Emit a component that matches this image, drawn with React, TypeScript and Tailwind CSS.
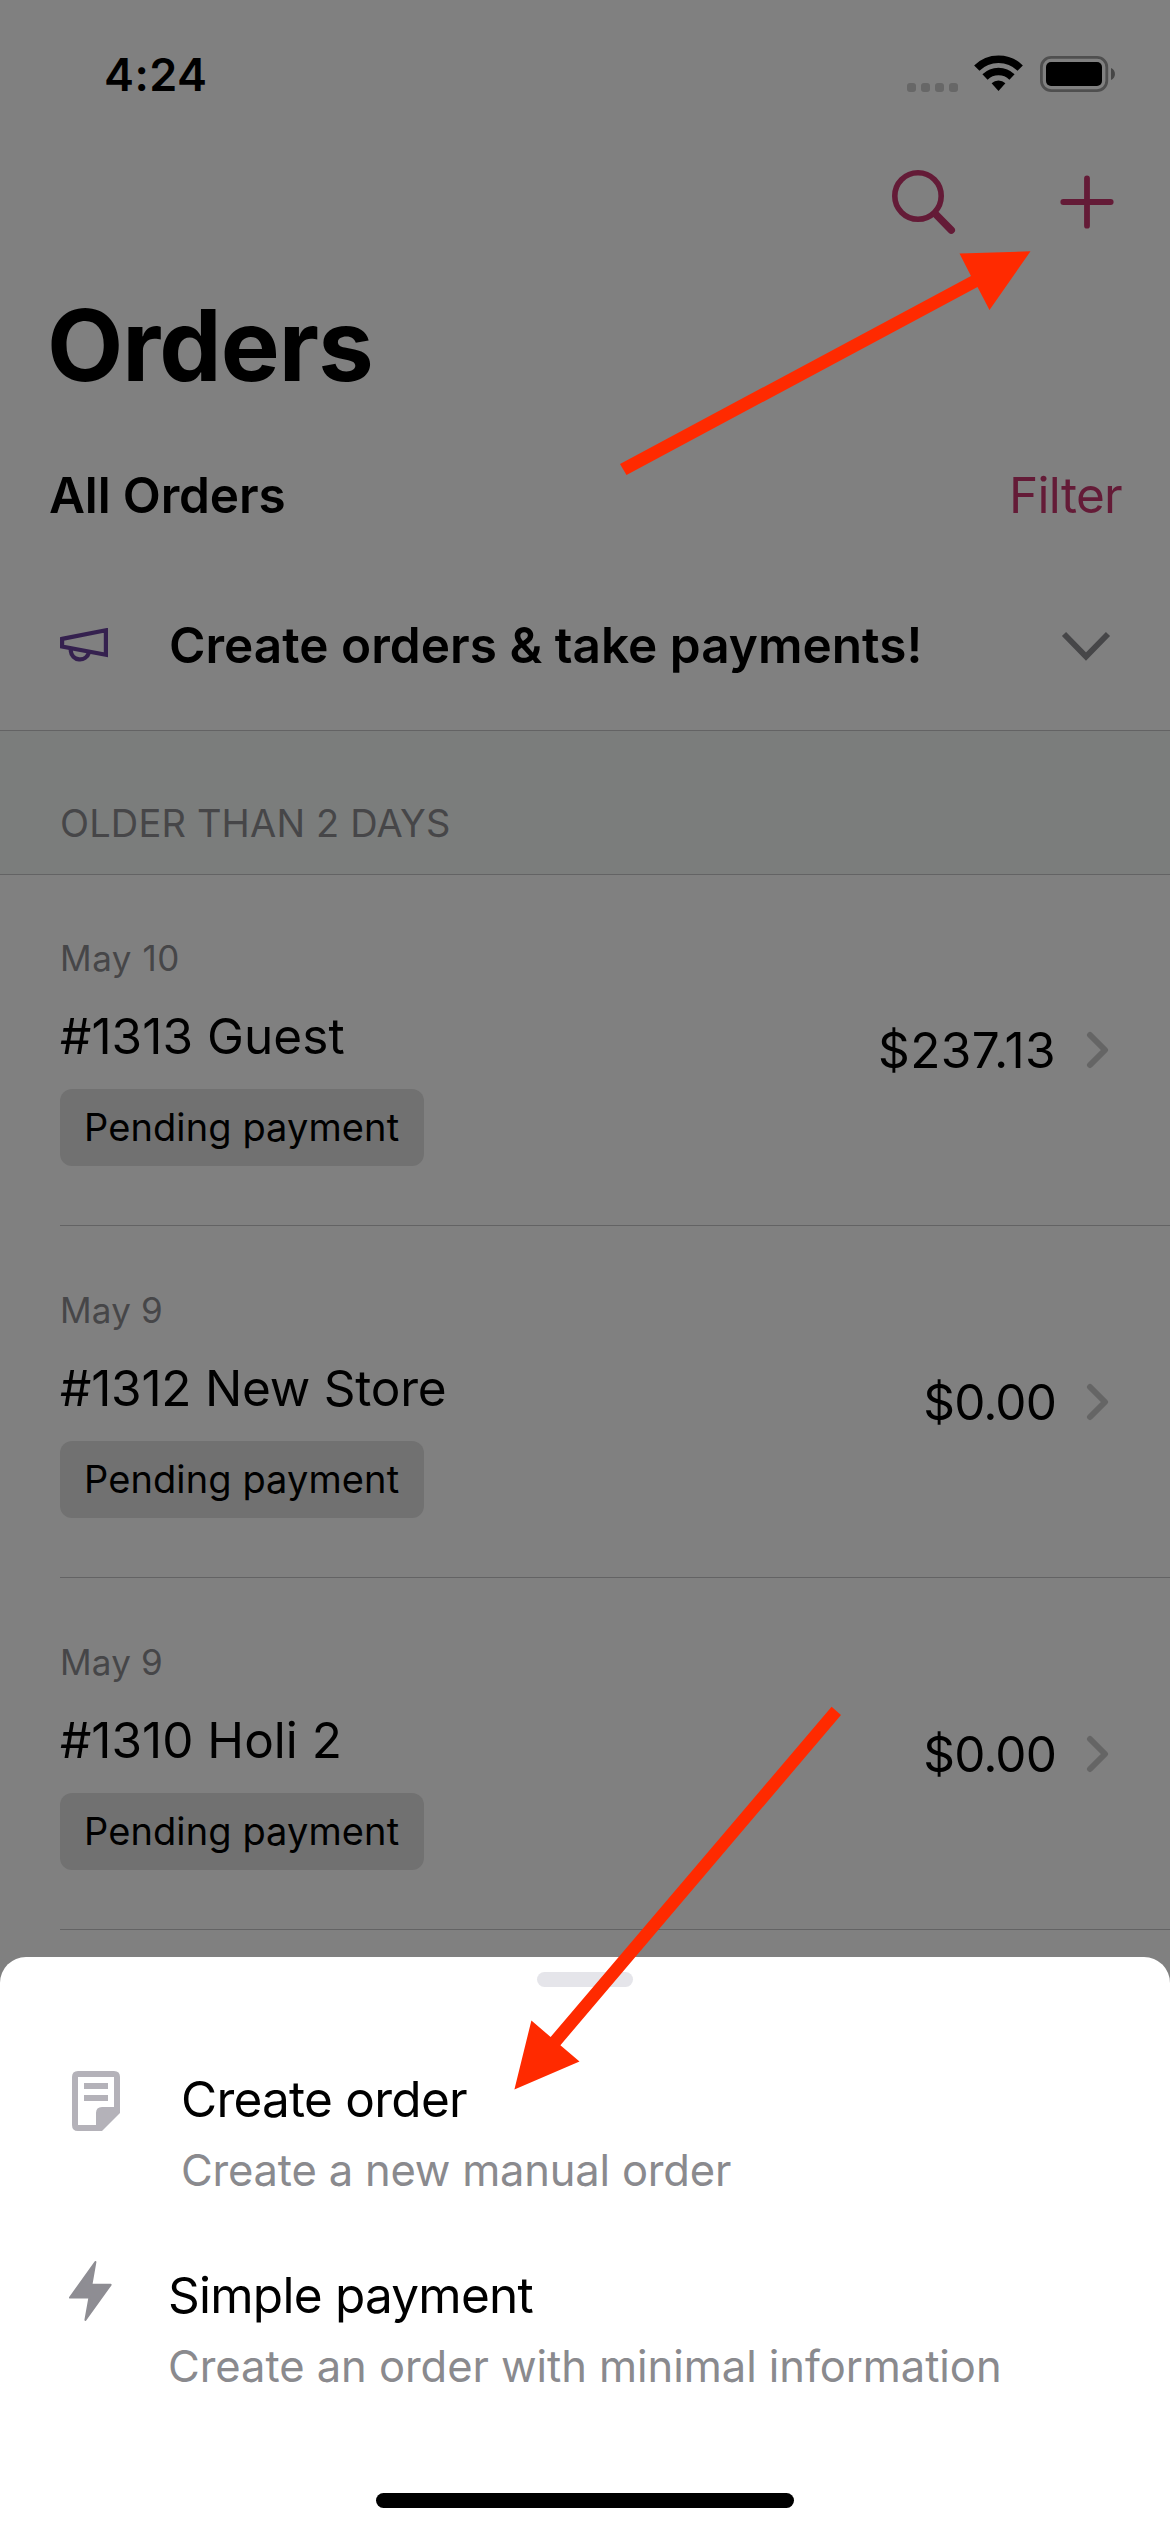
import React from "react";

type Order = {
  date: string;
  dateClass: string;
  title: string;
  titleClass: string;
  status: string;
  total: string;
  totalClass: string;
};

const orders: Order[] = [
  {
    date: "May 10",
    dateClass: "tracking-[0.55px]",
    title: "#1313 Guest",
    titleClass: "tracking-[0.05px]",
    status: "Pending payment",
    total: "$237.13",
    totalClass: "tracking-[0.42px]",
  },
  {
    date: "May 9",
    dateClass: "tracking-[0.2px]",
    title: "#1312 New Store",
    titleClass: "tracking-[-0.22px]",
    status: "Pending payment",
    total: "$0.00",
    totalClass: "tracking-[-0.9px]",
  },
  {
    date: "May 9",
    dateClass: "tracking-[0.2px]",
    title: "#1310 Holi 2",
    titleClass: "tracking-[0px]",
    status: "Pending payment",
    total: "$0.00",
    totalClass: "tracking-[-0.9px]",
  },
];

function StatusBar() {
  return (
    <div className="flex h-[150px] shrink-0 items-center justify-between pl-[104px] pr-[54px]">
      <span className="text-[45px] leading-[56px] font-semibold tracking-[0.45px]">4:24</span>
      <div className="flex items-center">
        <div className="mt-[24px] mr-[16px] flex gap-[5px]">
          {[0, 1, 2, 3].map((i) => (
            <span key={i} className="size-[9px] rounded-[3px] bg-[#676767]" />
          ))}
        </div>
        <svg className="-mt-[4px] mr-[17px] h-[36px] w-[49px]" viewBox="0 0 49 36" fill="none">
          <path d="M2.8 13.1 A31 31 0 0 1 46.2 13.1" stroke="#000" strokeWidth="7.6" />
          <path d="M11 22 A19.2 19.2 0 0 1 38 22" stroke="#000" strokeWidth="7.4" />
          <path d="M17.6 28.2 A10.2 10.2 0 0 1 31.4 28.2 L24.5 36 Z" fill="#000" />
        </svg>
        <svg className="-mt-[2px] h-[36px] w-[76px]" viewBox="0 0 76 36" fill="none">
          <rect x="1.4" y="1.4" width="65.4" height="33.2" rx="9.8" stroke="#4f4f4f" strokeWidth="2.8" />
          <rect x="6" y="6" width="56" height="24" rx="5" fill="#000" />
          <path d="M71 12 C76.3 14 76.3 22 71 24 Z" fill="#464646" />
        </svg>
      </div>
    </div>
  );
}

function NavBar() {
  return (
    <div className="flex h-[103px] shrink-0 items-center justify-end gap-[104px] pr-[56px] text-[#641b37]">
      <svg className="mt-[2px] h-[66px] w-[64px]" viewBox="0 0 64 66" fill="none" stroke="currentColor" strokeLinecap="round">
        <circle cx="26" cy="26" r="23.2" strokeWidth="5.6" />
        <path d="M43.5 44 L59.3 60.2" strokeWidth="7.4" />
      </svg>
      <svg className="h-[54px] w-[54px]" viewBox="0 0 54 54" fill="none" stroke="currentColor" strokeWidth="5.8" strokeLinecap="round">
        <path d="M27 3.3 V50.7 M3.3 27 H50.7" />
      </svg>
    </div>
  );
}

function PromoRow() {
  return (
    <div className="mt-[36px] flex h-[169px] shrink-0 items-center pr-[58px] pb-px pl-[60px]">
      <svg className="mt-[2px] h-[36px] w-[48px]" viewBox="0 0 48 36" fill="none" stroke="#35214f" strokeWidth="4.2">
        <path d="M2.1 10.9 L45.9 2.3 V26.8 L2.1 18.6 Z" />
        <path d="M10.8 20 V23 A9.2 9.2 0 0 0 28.8 24.8" />
      </svg>
      <span className="ml-[61px] flex-1 text-[49.5px] leading-[60px] font-semibold tracking-[0.02px]">
        Create orders &amp; take payments!
      </span>
      <svg className="mt-[2px] h-[32px] w-[52px]" viewBox="0 0 52 32" fill="none">
        <path d="M4 4 L26 26.5 L48 4" stroke="#464648" strokeWidth="5.8" />
      </svg>
    </div>
  );
}

function OrderRow({ order }: { order: Order }) {
  return (
    <li className="ml-[60px] flex h-[352px] shrink-0 items-center border-b border-[#636364] pr-[60px]">
      <div className="flex h-full flex-1 flex-col items-start pt-[63px]">
        <span className={`text-[35px] leading-[42px] text-[#464648] ${order.dateClass}`}>{order.date}</span>
        <span className={`mt-[27px] text-[49.5px] leading-[60px] ${order.titleClass}`}>{order.title}</span>
        <span className="mt-[23px] flex h-[77px] w-[364px] items-center rounded-[12px] bg-[#717171] pb-px pl-[24px] text-[38px] leading-[46px] tracking-[0.1px]">
          {order.status}
        </span>
      </div>
      <span className={`text-[49.5px] leading-[60px] ${order.totalClass}`}>{order.total}</span>
      <svg className="ml-[29px] h-[38px] w-[25px]" viewBox="0 0 25 38" fill="none">
        <path d="M5 4 L20 19 L5 34" stroke="#656565" strokeWidth="6" strokeLinecap="round" strokeLinejoin="round" />
      </svg>
    </li>
  );
}

function NoteIcon() {
  return (
    <svg className="h-[60px] w-[48px]" viewBox="0 0 48 60" fill="#b4b2b9">
      <path
        fillRule="evenodd"
        d="M6 0 H42 Q48 0 48 6 V42 L30 60 H6 Q0 60 0 54 V6 Q0 0 6 0 Z M6 6 V54 H24 V42 Q24 36 30 36 H42 V6 Z"
      />
      <path d="M12 12 H36 V18 H12 Z M12 24 H36 V30 H12 Z" />
    </svg>
  );
}

function BoltIcon() {
  return (
    <svg className="h-[60px] w-[43px]" viewBox="0 0 43 60" fill="#8e8d93" stroke="#8e8d93" strokeWidth="2" strokeLinejoin="round">
      <path d="M26.4 1 L1 36.6 H20.4 L16.4 59 L41.6 23.8 H22.4 Z" />
    </svg>
  );
}

function ActionSheet() {
  return (
    <div className="absolute inset-x-0 bottom-0 flex h-[575px] flex-col rounded-t-[26px] bg-white">
      <div className="mt-[15px] h-[15px] w-[96px] self-center rounded-full bg-[#e5e5ea]" />
      <button className="mt-[82px] flex items-start pl-[72px] text-left">
        <span className="mt-[2px]">
          <NoteIcon />
        </span>
        <span className="ml-[61px] flex flex-col">
          <span className="text-[49.5px] leading-[60px] tracking-[-0.75px]">Create order</span>
          <span className="mt-[14px] text-[43.5px] leading-[54px] tracking-[-0.2px] text-[#8a8a8e]">
            Create a new manual order
          </span>
        </span>
      </button>
      <button className="mt-[68px] flex items-start pl-[69px] text-left">
        <span className="-mt-[4px]">
          <BoltIcon />
        </span>
        <span className="ml-[56px] flex flex-col">
          <span className="text-[49.5px] leading-[60px] tracking-[-0.75px]">Simple payment</span>
          <span className="mt-[14px] text-[43.5px] leading-[54px] tracking-[-0.05px] text-[#8a8a8e]">
            Create an order with minimal information
          </span>
        </span>
      </button>
      <div className="mt-auto mb-[24px] h-[15px] w-[418px] self-center rounded-full bg-black" />
    </div>
  );
}

function Annotations() {
  return (
    <svg className="pointer-events-none absolute inset-0 h-[2532px] w-[1170px]" viewBox="0 0 1170 2532" fill="#ff2a00">
      <path d="M620 464 L971 276 L959.5 253.5 L1030.5 251.3 L989.5 310 L977.5 287 L626.5 475 Z" />
      <path d="M831.6 1706.8 L550.6 2037 L531.4 2020.4 L514.4 2089.6 L579.5 2061.6 L560.4 2045.2 L841 1715 Z" />
    </svg>
  );
}

export default function App() {
  return (
    <div className="relative flex h-[2532px] w-[1170px] flex-col overflow-hidden bg-[#808080] font-['Inter',sans-serif] text-black">
      <StatusBar />
      <NavBar />
      <h1 className="mt-[32px] pl-[47px] text-[99px] leading-[120px] font-bold tracking-[-0.95px]">Orders</h1>
      <div className="mt-[60px] flex items-center justify-between pr-[48px] pl-[49px] text-[49.5px] leading-[60px]">
        <span className="font-semibold tracking-[-0.15px]">All Orders</span>
        <span className="tracking-[-0.7px] text-[#641b37]">Filter</span>
      </div>
      <PromoRow />
      <div className="flex h-[145px] shrink-0 items-end border-y border-[#636364] bg-[#7b7d7c] pb-[28px] pl-[60px]">
        <span className="text-[38px] leading-[46px] tracking-[0.16px] text-[#464648]">OLDER THAN 2 DAYS</span>
      </div>
      <ul className="-mt-px flex flex-col">
        {orders.map((order) => (
          <OrderRow key={order.title} order={order} />
        ))}
      </ul>
      <ActionSheet />
      <Annotations />
    </div>
  );
}
